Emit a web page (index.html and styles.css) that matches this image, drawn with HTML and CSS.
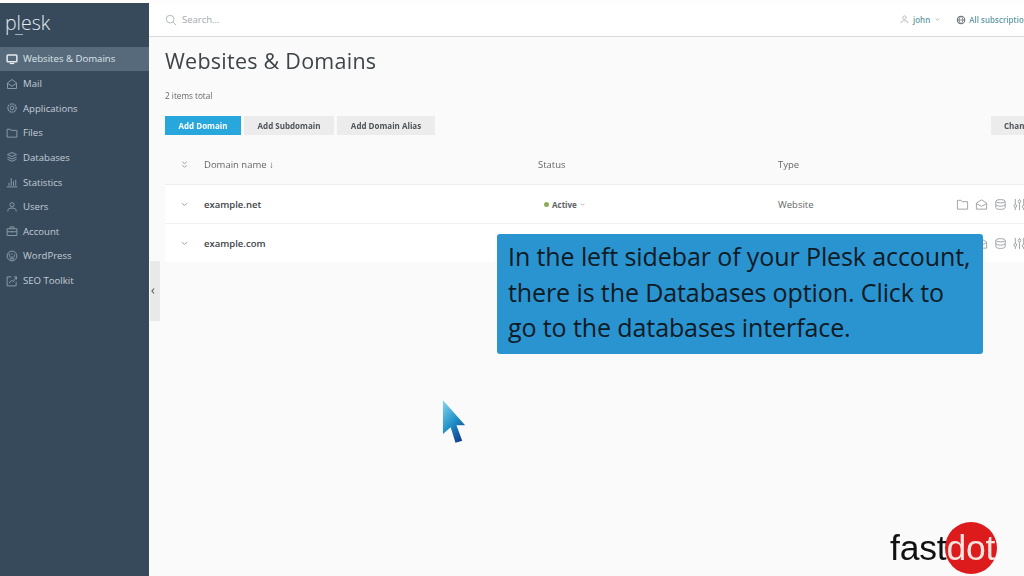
FILE: index.html
```html
<!DOCTYPE html>
<html lang="en">
<head>
<meta charset="utf-8">
<title>Plesk - Websites &amp; Domains</title>
<link rel="stylesheet" href="styles.css">
</head>
<body>
<div class="app">
  <aside class="sidebar">
    <div class="logo">plesk<span class="logo-mark"></span></div>
    <nav class="nav">
      <a class="nav-item active"><svg class="nav-icon" viewBox="0 0 16 16"><rect x="1.500" y="2.500" width="13" height="9" rx="1" fill="none" stroke="currentColor" stroke-width="2"/><path d="M5 14h6" stroke="currentColor" stroke-width="1.600"/></svg>Websites &amp; Domains</a>
      <a class="nav-item"><svg class="nav-icon" viewBox="0 0 16 16"><path d="M2 6.500 8 2l6 4.500V14H2zM2 7l6 4 6-4" fill="none" stroke="currentColor" stroke-width="1.300"/></svg>Mail</a>
      <a class="nav-item"><svg class="nav-icon" viewBox="0 0 16 16"><circle cx="8" cy="8" r="2.500" fill="none" stroke="currentColor" stroke-width="1.300"/><circle cx="8" cy="8" r="5.500" fill="none" stroke="currentColor" stroke-width="1.800" stroke-dasharray="2.200 1"/></svg>Applications</a>
      <a class="nav-item"><svg class="nav-icon" viewBox="0 0 16 16"><path d="M1.500 3h4.500l1 1.500h7.500V13.500h-13z" fill="none" stroke="currentColor" stroke-width="1.300"/></svg>Files</a>
      <a class="nav-item"><svg class="nav-icon" viewBox="0 0 16 16"><path d="M8 2l6 2.700-6 2.700-6-2.700zM2 8l6 2.700L14 8M2 11l6 2.700 6-2.700" fill="none" stroke="currentColor" stroke-width="1.300"/></svg>Databases</a>
      <a class="nav-item"><svg class="nav-icon" viewBox="0 0 16 16"><path d="M1 14.500h14M4 13V9M7 13V3M10 13V7M13 13V5" fill="none" stroke="currentColor" stroke-width="1.300"/></svg>Statistics</a>
      <a class="nav-item"><svg class="nav-icon" viewBox="0 0 16 16"><circle cx="8" cy="5" r="2.800" fill="none" stroke="currentColor" stroke-width="1.300"/><path d="M2.500 14v-1.500c0-2 2-3 5.500-3s5.500 1 5.500 3V14" fill="none" stroke="currentColor" stroke-width="1.300"/></svg>Users</a>
      <a class="nav-item"><svg class="nav-icon" viewBox="0 0 16 16"><path d="M1.500 5h13v9h-13zM5.500 5V2.500h5V5M1.500 9h13M8 8v2" fill="none" stroke="currentColor" stroke-width="1.300"/></svg>Account</a>
      <a class="nav-item"><svg class="nav-icon" viewBox="0 0 16 16"><circle cx="8" cy="8" r="6.500" fill="none" stroke="currentColor" stroke-width="1.300"/><path d="M4 5.500 6.500 13 8 8.500 9.500 13 12 5.500M3.500 5.500h2.500M7 5.500h2.500" fill="none" stroke="currentColor"/></svg>WordPress</a>
      <a class="nav-item"><svg class="nav-icon" viewBox="0 0 16 16"><path d="M7 2.500H1.500V14.500h12V9M4 11l3.500-4 2 2L14 2.500M10.500 2.500H14V6" fill="none" stroke="currentColor" stroke-width="1.300"/></svg>SEO Toolkit</a>
    </nav>
  </aside>
  <main class="main">
    <header class="topbar">
      <div class="search">
        <svg class="search-icon" viewBox="0 0 14 14"><circle cx="6" cy="6" r="4.500" fill="none" stroke="currentColor"/><path d="M9.500 9.500 13 13" stroke="currentColor"/></svg>
        <span>Search...</span>
      </div>
      <div class="top-right">
        <span class="top-link"><svg class="top-icon" viewBox="0 0 12 12"><circle cx="6" cy="3.500" r="2.300" fill="none" stroke="currentColor"/><path d="M1.500 11v-1c0-1.500 2-2.300 4.500-2.300s4.500.8 4.500 2.300v1" fill="none" stroke="currentColor"/></svg>john<svg class="caret" viewBox="0 0 8 8"><path d="M2 3l2 2 2-2" fill="none" stroke="currentColor"/></svg></span>
        <span class="top-link subs"><svg class="globe" viewBox="0 0 12 12"><circle cx="6" cy="6" r="4.500" fill="none" stroke="currentColor" stroke-width="1.300"/><path d="M1.500 6h9M6 1.500c-3 3-3 6 0 9M6 1.500c3 3 3 6 0 9" fill="none" stroke="currentColor"/></svg>All subscriptions</span>
      </div>
    </header>
    <div class="collapse-tab"><svg viewBox="0 0 6 8"><path d="M4 1.500 2 4l2 2.500" fill="none" stroke="currentColor" stroke-width="1.200"/></svg></div>
    <section class="content">
      <h1 class="title">Websites &amp; Domains</h1>
      <p class="count">2 items total</p>
      <div class="toolbar">
        <button class="btn primary">Add Domain</button>
        <button class="btn">Add Subdomain</button>
        <button class="btn">Add Domain Alias</button>
        <button class="btn change">Change View</button>
      </div>
      <div class="table">
        <div class="row head">
          <span class="c-exp"><svg class="dbl" viewBox="0 0 10 10"><path d="M2.500 2 5 4l2.500-2M2.500 6 5 8l2.500-2" fill="none" stroke="currentColor"/></svg></span>
          <span class="c-name">Domain name ↓</span>
          <span class="c-status">Status</span>
          <span class="c-type">Type</span>
        </div>
        <div class="row">
          <span class="c-exp"><svg class="chev" viewBox="0 0 10 10"><path d="M2 3.500 5 6l3-2.500" fill="none" stroke="currentColor"/></svg></span>
          <span class="c-name domain">example.net</span>
          <span class="c-status state"><i class="dot"></i><b class="active-label">Active</b><svg class="caret" viewBox="0 0 8 8"><path d="M2 3l2 2 2-2" fill="none" stroke="currentColor"/></svg></span>
          <span class="c-type value">Website</span>
          <span class="actions">
            <svg class="act" viewBox="0 0 14 14"><path d="M1.500 2.500h4l1 1.500h6v8h-11z" fill="none" stroke="currentColor"/></svg>
            <svg class="act" viewBox="0 0 14 14"><path d="M1.500 5.500 7 2l5.500 3.500V12h-11zM1.500 6 7 9l5.500-3" fill="none" stroke="currentColor"/></svg>
            <svg class="act" viewBox="0 0 14 14"><ellipse cx="7" cy="3.500" rx="5" ry="1.800" fill="none" stroke="currentColor"/><path d="M2 3.500v7c0 1 2.200 1.800 5 1.800s5-.8 5-1.800v-7M2 7c0 1 2.200 1.800 5 1.800S12 8 12 7" fill="none" stroke="currentColor"/></svg>
            <svg class="act" viewBox="0 0 14 14"><path d="M2.500 1v6M2.500 10v3M7 1v1M7 5.500V13M11.500 1v7M11.500 11v2" stroke="currentColor"/><circle cx="2.500" cy="8.500" r="1.500" fill="none" stroke="currentColor"/><circle cx="7" cy="3.800" r="1.500" fill="none" stroke="currentColor"/><circle cx="11.500" cy="9.500" r="1.500" fill="none" stroke="currentColor"/></svg>
          </span>
        </div>
        <div class="row last">
          <span class="c-exp"><svg class="chev" viewBox="0 0 10 10"><path d="M2 3.500 5 6l3-2.500" fill="none" stroke="currentColor"/></svg></span>
          <span class="c-name domain">example.com</span>
          <span class="actions">
            <svg class="act" viewBox="0 0 14 14"><path d="M1.500 2.500h4l1 1.500h6v8h-11z" fill="none" stroke="currentColor"/></svg>
            <svg class="act" viewBox="0 0 14 14"><path d="M1.500 5.500 7 2l5.500 3.500V12h-11zM1.500 6 7 9l5.500-3" fill="none" stroke="currentColor"/></svg>
            <svg class="act" viewBox="0 0 14 14"><ellipse cx="7" cy="3.500" rx="5" ry="1.800" fill="none" stroke="currentColor"/><path d="M2 3.500v7c0 1 2.200 1.800 5 1.800s5-.8 5-1.800v-7M2 7c0 1 2.200 1.800 5 1.800S12 8 12 7" fill="none" stroke="currentColor"/></svg>
            <svg class="act" viewBox="0 0 14 14"><path d="M2.500 1v6M2.500 10v3M7 1v1M7 5.500V13M11.500 1v7M11.500 11v2" stroke="currentColor"/><circle cx="2.500" cy="8.500" r="1.500" fill="none" stroke="currentColor"/><circle cx="7" cy="3.800" r="1.500" fill="none" stroke="currentColor"/><circle cx="11.500" cy="9.500" r="1.500" fill="none" stroke="currentColor"/></svg>
          </span>
        </div>
      </div>
    </section>
  </main>
</div>
<div class="callout">In the left sidebar of your Plesk account, there is the Databases option. Click to go to the databases interface.</div>
<svg class="cursor" viewBox="0 0 28 46">
  <defs><linearGradient id="cg" x1="0.100" y1="0" x2="0.700" y2="1"><stop offset="0" stop-color="#7fd2ea"/><stop offset="0.550" stop-color="#1f8fc8"/><stop offset="1" stop-color="#123f8e"/></linearGradient></defs>
  <path d="M2 1 25 27 16 27 22 43 15 45 10 29 2 36z" fill="url(#cg)"/>
</svg>
<div class="brand"><span class="brand-fast">fast</span><span class="brand-dot">dot</span></div>
</body>
</html>
```
FILE: styles.css
```css
* { box-sizing: border-box; }
html, body { margin: 0; height: 100%; overflow: hidden; }
body { background: #fafafa; font-family: "Open Sans", "Liberation Sans", sans-serif; color: #444; }
.app { display: flex; height: 576px; padding-top: 3px; background: #fdfdfd; filter: blur(0.5px); }
.sidebar { width: 149px; flex: none; background: #374a5c; color: #c5ced6; }
.logo { position: relative; height: 43.600px; padding: 7px 0 0 5px; font-size: 19.500px; line-height: 26px; color: #e6ebef; font-family: "Open Sans", sans-serif; font-weight: 300; }
.logo-mark { position: absolute; left: 15px; top: 31px; width: 8px; height: 1px; background: #9fb0bd; }
.nav { display: flex; flex-direction: column; }
.nav-item { display: flex; align-items: center; height: 24.630px; padding-left: 6px; font-size: 9.600px; font-weight: 500; color: #c3ccd4; gap: 5px; }
.nav-item.active { background: #566a7c; color: #dfe5ea; }
.nav-icon { width: 12px; height: 12px; flex: none; color: #8b9aa8; }
.active .nav-icon { color: #e6ebef; }
.main { flex: 1; min-width: 0; position: relative; display: flex; flex-direction: column; background: #fafafa; }
.topbar { height: 34px; flex: none; display: flex; justify-content: space-between; align-items: center; background: #fff; border-bottom: 1px solid #d9dcde; padding-left: 16px; font-size: 9px; white-space: nowrap; }
.search { display: flex; align-items: center; gap: 5px; color: #a2a8ad; font-size: 9.500px; }
.search-icon { width: 12px; height: 12px; color: #a8aeb3; }
.top-right { display: flex; align-items: center; width: 124px; gap: 15px; color: #5f9aa3; font-weight: 600; font-size: 8px; }
.top-link { display: inline-flex; align-items: center; flex: none; gap: 3px; }
.top-icon { width: 9px; height: 9px; color: #a3a8ad; margin-right: 1px; }
.globe { width: 10px; height: 10px; color: #6e7479; margin-right: 0; }
.caret { width: 7px; height: 7px; color: #aaa; margin-left: 1px; }
.state .caret { margin-left: 2px; }
.collapse-tab { position: absolute; left: 1px; top: 258px; width: 10px; height: 60px; background: #e9e9e9; color: #666; display: flex; align-items: center; }
.collapse-tab svg { width: 6px; height: 8px; }
.content { padding: 0 0 0 16px; min-width: 0; }
.title { margin: 0; padding-top: 10px; font-size: 21.500px; line-height: 28px; font-weight: 400; color: #3e4448; letter-spacing: .25px; white-space: nowrap; }
.count { margin: 0; padding-top: 15px; font-size: 8.200px; line-height: 11px; color: #666; }
.toolbar { display: flex; margin-top: 15px; gap: 3px; height: 19px; }
.btn { border: 0; padding: 0 13px; height: 19px; background: #ececec; color: #4f5458; font: 700 8px "Open Sans", sans-serif; white-space: nowrap; flex: none; }
.btn.primary { background: #28a7dc; color: #fff; width: 76px; padding: 0; margin-right: 0; }
.btn:nth-child(2) { width: 90px; padding: 0; }
.btn:nth-child(3) { width: 98px; padding: 0; }
.btn.change { margin-left: 553px; text-align: left; width: 60px; }
.table { margin-top: 10px; }
.row { display: flex; align-items: center; position: relative; height: 39px; background: #fff; border-bottom: 1px solid #f0f0f0; font-size: 9.500px; white-space: nowrap; }
.row.head { height: 40px; background: transparent; border-bottom: 1px solid #eeeeee; color: #666; }
.row.last { height: 38px; border-bottom: 0; padding-top: 1px; }
.c-exp { width: 39px; flex: none; padding-left: 15px; display: flex; color: #999; }
.c-exp svg { width: 9px; height: 9px; }
.c-name { width: 334px; flex: none; }
.domain { font-weight: 600; color: #3e4448; font-size: 9.500px; }
.c-status { width: 240px; flex: none; display: flex; align-items: center; }
.state { padding-left: 6px; }
.dot { width: 5px; height: 5px; border-radius: 50%; background: #8dab5c; margin-right: 3px; }
.active-label { font-weight: 700; font-size: 8px; color: #5c6266; }
.c-type { flex: none; }
.value { color: #666; }
.actions { position: absolute; left: 791px; top: 13px; display: flex; gap: 6px; color: #9a9fa3; }
.act { width: 13px; height: 13px; flex: none; }
.callout { position: absolute; left: 497px; top: 234px; width: 486px; height: 120px; padding: 5px 8px 0 11px; border-radius: 3px; background: #2a94d0; color: #0e1a24; font: 400 25px/35.500px "Open Sans", "Liberation Sans", sans-serif; letter-spacing: -.1px; }
.cursor { position: absolute; left: 441px; top: 399px; width: 27px; height: 45px; }
.brand { position: absolute; left: 890px; top: 522px; width: 110px; height: 52px; display: flex; align-items: center; font: 400 35.500px/52px "Liberation Sans", sans-serif; letter-spacing: -.2px; }
.brand::before { content: ""; position: absolute; left: 55px; top: 0; width: 52px; height: 52px; border-radius: 50%; background: #dd1a1c; }
.brand-fast { position: relative; color: #111; }
.brand-dot { position: relative; color: #f6e4e0; }
```
